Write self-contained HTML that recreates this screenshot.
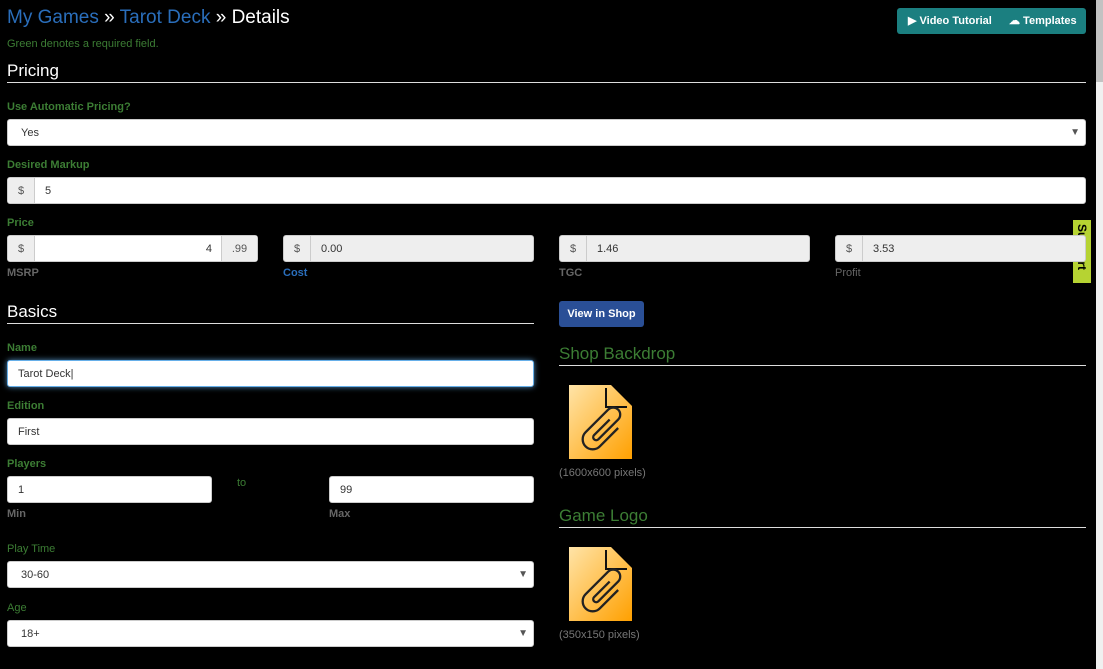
<!DOCTYPE html>
<html><head><meta charset="utf-8">
<style>
*{box-sizing:border-box;margin:0;padding:0}
body{width:1103px;height:669px;background:#000;font-family:"Liberation Sans",Arial,sans-serif;position:relative;overflow:hidden;color:#fff}
.a{position:absolute;white-space:nowrap}
.lbl{position:absolute;font-size:11px;font-weight:bold;color:#3c7d34}
.lbln{position:absolute;font-size:11px;color:#3c7d34}
.sub{position:absolute;font-size:11px;font-weight:bold;color:#666}
.in{position:absolute;background:#fff;border:1px solid #ccc;border-radius:3px;height:27px;font-size:11px;color:#333;line-height:26px;padding-left:10px;z-index:2}
.dis{background:#eee}
.add{position:absolute;top:0;left:0;height:25px;width:27px;border-right:1px solid #ccc;background:#eee;text-align:center;color:#555;border-radius:3px 0 0 3px}
.caret{position:absolute;right:5px;top:0;font-size:10px;color:#555}
h2{position:absolute;font-weight:normal;font-size:17px}
.hr{position:absolute;height:1px;background:#ddd}
</style></head><body>
<div class="a" style="left:7px;top:7px;font-size:19px;color:#2a6ebb">My Games <span style="color:#fff">»</span> Tarot Deck <span style="color:#fff">» Details</span></div>
<div class="a" style="left:7px;top:38px;font-size:11px;color:#3c7d34">Green denotes a required field.</div>
<div class="a" style="left:897px;top:8px;width:189px;height:26px;background:#1b7f80;border-radius:3px;font-size:11px;font-weight:bold;color:#fff;line-height:26px"><span style="position:absolute;left:11px">▶ Video Tutorial</span><span style="position:absolute;left:112px">☁ Templates</span></div>
<h2 style="left:7px;top:61px">Pricing</h2><div class="hr" style="left:7px;top:82px;width:1079px"></div>
<div class="lbl" style="left:7px;top:101px">Use Automatic Pricing?</div>
<div class="in" style="left:7px;top:119px;width:1079px;padding-left:13px">Yes<span class="caret">▼</span></div>
<div class="lbl" style="left:7px;top:159px">Desired Markup</div>
<div class="in" style="left:7px;top:177px;width:1079px;padding-left:37px"><span class="add">$</span>5</div>
<div class="lbl" style="left:7px;top:217px">Price</div>
<div class="in" style="left:7px;top:235px;width:251px"><span class="add">$</span><span style="position:absolute;left:27px;top:0;width:187px;height:25px;background:#fff;text-align:right;padding-right:10px">4</span><span style="position:absolute;right:0;top:0;width:36px;height:25px;background:#eee;border-left:1px solid #ccc;text-align:center;color:#555">.99</span></div>
<div class="in dis" style="left:283px;top:235px;width:251px;padding-left:37px"><span class="add">$</span>0.00</div>
<div class="in dis" style="left:559px;top:235px;width:251px;padding-left:37px"><span class="add">$</span>1.46</div>
<div class="in dis" style="left:835px;top:235px;width:251px;padding-left:37px"><span class="add">$</span>3.53</div>
<div class="sub" style="left:7px;top:267px">MSRP</div>
<div class="sub" style="left:283px;top:267px;color:#2a6ebb">Cost</div>
<div class="sub" style="left:559px;top:267px">TGC</div>
<div class="sub" style="left:835px;top:267px;font-weight:normal">Profit</div>
<div class="a" style="left:1073px;top:220px;width:18px;height:63px;background:#b6d332;z-index:1;overflow:hidden"><div style="position:absolute;left:16px;top:4px;transform-origin:0 0;transform:rotate(90deg);font-size:12px;font-weight:bold;color:#000">Support</div></div>
<div class="a" style="left:1096px;top:0;width:7px;height:669px;background:#f0f0f0"><div style="width:7px;height:82px;background:#c2c2c2"></div></div>
<h2 style="left:7px;top:302px">Basics</h2><div class="hr" style="left:7px;top:323px;width:527px"></div>
<div class="lbl" style="left:7px;top:342px">Name</div>
<div class="in" style="left:7px;top:360px;width:527px;border-color:#66afe9;box-shadow:0 0 6px rgba(102,175,233,.8)">Tarot Deck|</div>
<div class="lbl" style="left:7px;top:400px">Edition</div>
<div class="in" style="left:7px;top:418px;width:527px">First</div>
<div class="lbl" style="left:7px;top:458px">Players</div>
<div class="in" style="left:7px;top:476px;width:205px">1</div>
<div class="lbln" style="left:237px;top:477px">to</div>
<div class="in" style="left:329px;top:476px;width:205px">99</div>
<div class="sub" style="left:7px;top:508px">Min</div>
<div class="sub" style="left:329px;top:508px">Max</div>
<div class="lbln" style="left:7px;top:543px">Play Time</div>
<div class="in" style="left:7px;top:561px;width:527px;padding-left:13px">30-60<span class="caret">▼</span></div>
<div class="lbln" style="left:7px;top:602px">Age</div>
<div class="in" style="left:7px;top:620px;width:527px;padding-left:13px">18+<span class="caret">▼</span></div>
<div class="a" style="left:559px;top:301px;width:85px;height:26px;background:#2a4f96;border-radius:3px;font-size:11px;font-weight:bold;line-height:26px;text-align:center">View in Shop</div>
<h2 style="left:559px;top:344px;color:#3c7d34">Shop Backdrop</h2><div class="hr" style="left:559px;top:365px;width:527px"></div>
<svg class="a" style="left:569px;top:385px" width="63" height="74" viewBox="0 0 63 74"><defs><linearGradient id="g" x1="0" y1="0" x2="1" y2="1"><stop offset="0" stop-color="#ffe4a8"/><stop offset="1" stop-color="#ffa000"/></linearGradient></defs><path d="M0 0H42L63 21V74H0Z" fill="url(#g)"/><path d="M37 3V22H58" fill="none" stroke="#111" stroke-width="2"/><g transform="translate(35,43) rotate(45)"><path d="M-2 -10V12a3 3 0 0 0 6 0V-16a7 7 0 0 0 -14 0V16a10 10 0 0 0 20 0V-10" fill="none" stroke="#222" stroke-width="2.3"/></g></svg>
<div class="a" style="left:559px;top:467px;font-size:11px;color:#777">(1600x600 pixels)</div>
<h2 style="left:559px;top:506px;color:#3c7d34">Game Logo</h2><div class="hr" style="left:559px;top:527px;width:527px"></div>
<svg class="a" style="left:569px;top:547px" width="63" height="74" viewBox="0 0 63 74"><path d="M0 0H42L63 21V74H0Z" fill="url(#g)"/><path d="M37 3V22H58" fill="none" stroke="#111" stroke-width="2"/><g transform="translate(35,43) rotate(45)"><path d="M-2 -10V12a3 3 0 0 0 6 0V-16a7 7 0 0 0 -14 0V16a10 10 0 0 0 20 0V-10" fill="none" stroke="#222" stroke-width="2.3"/></g></svg>
<div class="a" style="left:559px;top:629px;font-size:11px;color:#777">(350x150 pixels)</div>
</body></html>
